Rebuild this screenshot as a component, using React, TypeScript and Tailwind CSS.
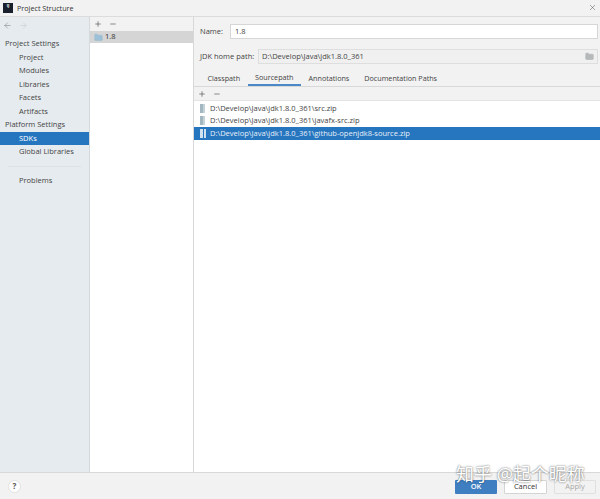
import { ArrowLeft, ArrowRight, Folder, Minus, Plus, X } from "lucide-react";

const font = { fontFamily: '"Open Sans", "Noto Sans CJK SC", sans-serif' };

function NavItem({ label, active }: { label: string; active?: boolean }) {
  return (
    <div
      className={`h-[13.5px] pl-[19px] leading-[13.5px] ${
        active ? "bg-[#2675bf] text-white" : "text-[#444]"
      }`}
    >
      {label}
    </div>
  );
}

function NavHeading({ label }: { label: string }) {
  return <div className="h-[13.5px] pl-[5px] leading-[13.5px] text-[#444]">{label}</div>;
}

function ZipIcon({ active }: { active?: boolean }) {
  return (
    <span className={`flex h-[9px] w-[6px] shrink-0 ${active ? "gap-px" : ""}`}>
      <span className={`w-[3px] ${active ? "bg-[#cfe0f0]" : "bg-[#a3b7c0]"}`}></span>
      <span className={`w-[2px] ${active ? "bg-[#cfe0f0]" : "bg-[#c5d3d8]"}`}></span>
    </span>
  );
}

function SourceRow({ path, active }: { path: string; active?: boolean }) {
  return (
    <div
      className={`flex h-[12.5px] items-center gap-[4px] pl-[6px] ${
        active ? "bg-[#2675bf] text-[#e8f0f8]" : "text-[#444]"
      }`}
    >
      <ZipIcon active={active} />
      <span>{path}</span>
    </div>
  );
}

function Tab({ label, active }: { label: string; active?: boolean }) {
  return (
    <div
      className={`flex h-[15px] items-center px-[7.5px] text-[7.2px] text-[#444] ${
        active ? "border-b-2 border-[#4a88c7]" : ""
      }`}
    >
      {label}
    </div>
  );
}

export default function App() {
  return (
    <div
      className="relative flex h-[499px] w-[600px] flex-col overflow-hidden bg-[#f2f2f2] text-[7.5px]"
      style={font}
    >
      {/* Title bar */}
      <div className="flex h-[17px] shrink-0 items-center border-b border-[#dcdcdc] pl-[3px] pr-[3px]">
        <div className="flex h-[10px] w-[10px] items-start justify-center bg-[#1a1f2e] text-[4px] font-bold leading-[6px] text-white">
          IJ
        </div>
        <span className="ml-[4px] text-[7.2px] text-[#333]">Project Structure</span>
        <X className="ml-auto mt-[-1px] h-[9px] w-[9px] text-[#444]" strokeWidth={1.2} />
      </div>

      {/* Main */}
      <div className="flex min-h-0 flex-1 border-b border-[#d8d8d8]">
        {/* Sidebar */}
        <div className="flex w-[90px] shrink-0 flex-col border-r border-[#d5d9dc] bg-[#e6ebef]">
          <div className="flex h-[16px] items-center gap-[3px] pl-[3px] pt-[1px]">
            <ArrowLeft className="h-[9px] w-[9px] text-[#7a8288]" strokeWidth={1.5} />
            <span className="w-[1px]"></span>
            <ArrowRight className="h-[9px] w-[9px] text-[#c4c9cc]" strokeWidth={1.5} />
          </div>
          <div className="mt-[4px]">
            <NavHeading label="Project Settings" />
            <NavItem label="Project" />
            <NavItem label="Modules" />
            <NavItem label="Libraries" />
            <NavItem label="Facets" />
            <NavItem label="Artifacts" />
            <NavHeading label="Platform Settings" />
            <NavItem label="SDKs" active />
            <NavItem label="Global Libraries" />
          </div>
          <div className="mx-[8px] my-[7px] border-t border-[#dde1e4]"></div>
          <NavItem label="Problems" />
        </div>

        {/* SDK list */}
        <div className="flex w-[104px] shrink-0 flex-col border-r border-[#d8d8d8] bg-white">
          <div className="flex h-[14px] items-center gap-[7px] bg-[#f2f2f2] pl-[4px]">
            <Plus className="h-[8px] w-[8px] text-[#555]" strokeWidth={2} />
            <Minus className="h-[8px] w-[8px] text-[#555]" strokeWidth={2} />
          </div>
          <div className="flex h-[12px] items-center gap-[2px] bg-[#d5d5d5] pl-[4px] text-[#333]">
            <Folder className="h-[9px] w-[9px] fill-[#9cc0d8] text-[#8fb3cc]" strokeWidth={1} />
            <span>1.8</span>
          </div>
        </div>

        {/* Detail */}
        <div className="flex min-w-0 flex-1 flex-col">
          <div className="flex items-center pl-[6px] pr-[2px] pt-[7px] text-[#444]">
            <span className="w-[30px]">Name:</span>
            <div className="flex h-[15px] flex-1 items-center border border-[#d6d6d6] bg-white pl-[4px]">
              1.8
            </div>
          </div>
          <div className="flex items-center pl-[6px] pr-[2px] pt-[10px] text-[#444]">
            <span className="w-[58px]">JDK home path:</span>
            <div className="flex h-[15px] flex-1 items-center border border-[#dedede] bg-[#f0f0f0] pl-[3px] pr-[3px] text-[#444]">
              D:\Develop\Java\jdk1.8.0_361
              <Folder className="ml-auto h-[9px] w-[9px] fill-[#b5b9bb] text-[#b5b9bb]" />
            </div>
          </div>
          <div className="flex border-b border-[#d8d8d8] pl-[6px] pt-[7px]">
            <Tab label="Classpath" />
            <Tab label="Sourcepath" active />
            <Tab label="Annotations" />
            <Tab label="Documentation Paths" />
          </div>
          <div className="flex h-[14px] items-center gap-[7px] border-b border-[#e4e4e4] pl-[4px]">
            <Plus className="h-[8px] w-[8px] text-[#555]" strokeWidth={2} />
            <Minus className="h-[8px] w-[8px] text-[#555]" strokeWidth={2} />
          </div>
          <div className="flex-1 bg-white pt-[1px]">
            <SourceRow path="D:\Develop\Java\jdk1.8.0_361\src.zip" />
            <SourceRow path="D:\Develop\Java\jdk1.8.0_361\javafx-src.zip" />
            <SourceRow path="D:\Develop\Java\jdk1.8.0_361\github-openjdk8-source.zip" active />
          </div>
        </div>
      </div>

      {/* Footer */}
      <div className="flex h-[26px] shrink-0 items-center pl-[8px] pr-[4px]">
        <div className="flex h-[13px] w-[13px] items-center justify-center rounded-full border border-[#e2e2e2] bg-white text-[8px] font-bold text-[#555]">
          ?
        </div>
        <div className="ml-auto flex gap-[7px] pt-[1px]">
          <div className="flex h-[14px] w-[42px] items-center justify-center rounded-[1px] bg-[#3f7fc1] font-semibold text-white">
            OK
          </div>
          <div className="flex h-[14px] w-[43px] items-center justify-center rounded-[1px] border border-[#d4d4d4] bg-white text-[#333]">
            Cancel
          </div>
          <div className="flex h-[14px] w-[42px] items-center justify-center rounded-[1px] border border-[#e0e0e0] text-[#a8a8a8]">
            Apply
          </div>
        </div>
      </div>

      {/* Watermark */}
      <div className="absolute left-[456px] top-[465px] whitespace-nowrap text-[18px] leading-[18px] text-white [text-shadow:0_0_2px_rgba(0,0,0,0.7)]">
        知乎 @起个昵称
      </div>
    </div>
  );
}
